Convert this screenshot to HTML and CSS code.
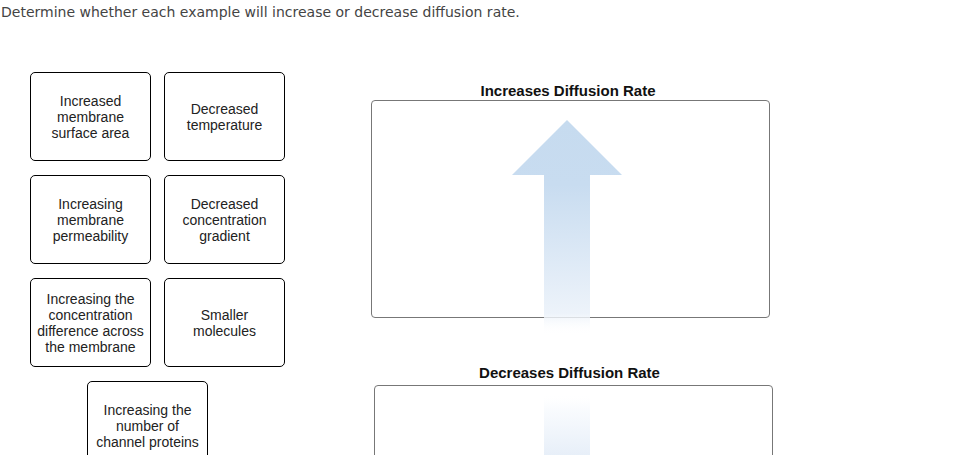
FILE: index.html
```html
<!DOCTYPE html>
<html lang="en">
<head>
  <meta charset="utf-8">
  <title>Diffusion rate sorting</title>
  <link rel="stylesheet" href="styles.css">
</head>
<body>

  <p class="prompt">Determine whether each example will increase or decrease diffusion rate.</p>

  <div class="workspace">
    <div class="tiles">
      <div class="tile">Increased membrane surface area</div>
      <div class="tile">Decreased temperature</div>
      <div class="tile">Increasing membrane permeability</div>
      <div class="tile">Decreased concentration gradient</div>
      <div class="tile">Increasing the concentration difference across the membrane</div>
      <div class="tile">Smaller molecules</div>
      <div class="tile tile-last">Increasing the number of channel proteins</div>
    </div>

    <div class="targets">
      <div class="target">
        <div class="target-title">Increases Diffusion Rate</div>
        <div class="drop-zone">
          <svg class="arrow arrow-up" width="112" height="215" viewBox="0 0 112 215">
            <defs>
              <linearGradient id="fadeUp" x1="0" y1="0" x2="0" y2="215" gradientUnits="userSpaceOnUse">
                <stop offset="0" stop-color="#c6dbef"/>
                <stop offset="0.3" stop-color="#c8dcf0"/>
                <stop offset="0.9" stop-color="#edf3fa"/>
                <stop offset="1" stop-color="#ffffff" stop-opacity="0"/>
              </linearGradient>
            </defs>
            <polygon fill="url(#fadeUp)" points="56,0 111,55 79,55 79,215 33,215 33,55 1,55"/>
          </svg>
        </div>
      </div>

      <div class="target target-down">
        <div class="target-title">Decreases Diffusion Rate</div>
        <div class="drop-zone">
          <svg class="arrow arrow-down" width="112" height="215" viewBox="0 0 112 215">
            <defs>
              <linearGradient id="fadeDown" x1="0" y1="0" x2="0" y2="215" gradientUnits="userSpaceOnUse">
                <stop offset="0" stop-color="#ffffff" stop-opacity="0"/>
                <stop offset="0.06" stop-color="#fafcfe"/>
                <stop offset="0.3" stop-color="#e6eef8"/>
                <stop offset="1" stop-color="#c6dbef"/>
              </linearGradient>
            </defs>
            <polygon fill="url(#fadeDown)" points="33,0 79,0 79,160 111,160 56,215 1,160 33,160"/>
          </svg>
        </div>
      </div>
    </div>
  </div>

</body>
</html>
```

FILE: styles.css
```css
body {
  margin: 0;
  background: #fff;
  font-family: "Liberation Sans", Arial, sans-serif;
  color: #222;
}

.prompt {
  margin: 0;
  padding: 4px 0 0 1px;
  font-family: "DejaVu Sans", Verdana, sans-serif;
  font-size: 14px;
  line-height: 16px;
  color: #444;
}

.workspace {
  display: flex;
  align-items: flex-start;
}

/* draggable answer cards */
.tiles {
  display: grid;
  grid-template-columns: 121px 121px;
  gap: 14px 13px;
  margin: 52px 0 0 30px;
}

.tile {
  box-sizing: border-box;
  width: 121px;
  height: 89px;
  padding: 0 5px;
  border: 1px solid #000;
  border-radius: 5px;
  display: flex;
  align-items: center;
  justify-content: center;
  text-align: center;
  font-size: 14px;
  line-height: 16px;
  color: #222;
}

.tile-last {
  grid-column: 1 / span 2;
  margin-left: 57px;
}

/* sorting bins */
.targets {
  margin: 62px 0 0 86px;
  display: flex;
  flex-direction: column;
}

.target-down {
  margin: 46px 0 0 3px;
}

.target-title {
  font-size: 15px;
  line-height: 16px;
  font-weight: bold;
  color: #111;
  text-align: center;
  padding-right: 8px;
  margin: 1px 0 1px;
}

.target-down .target-title {
  margin-bottom: 4px;
}

.drop-zone {
  position: relative;
  box-sizing: border-box;
  width: 399px;
  height: 218px;
  border: 1px solid #777;
  border-radius: 4px;
}

.arrow {
  position: absolute;
  display: block;
}

.arrow-up {
  top: 19px;
  left: 139px;
}

.arrow-down {
  top: 8px;
  left: 136px;
}
```
